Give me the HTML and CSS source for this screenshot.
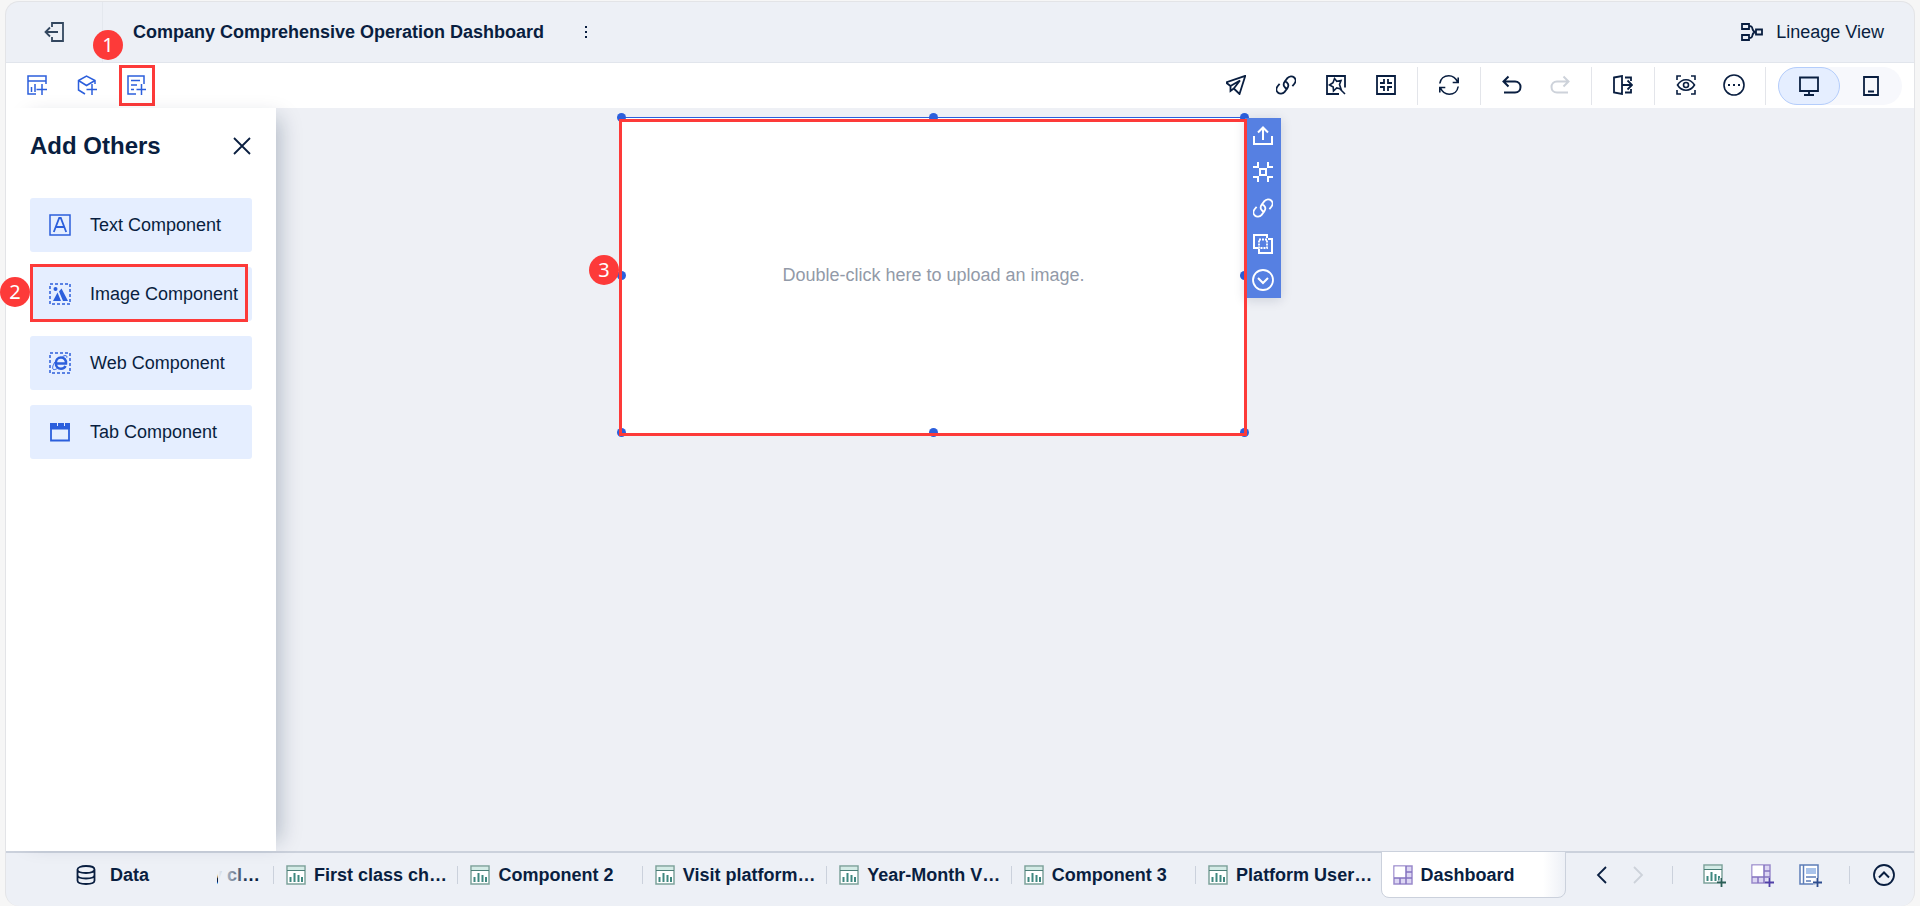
FILE: index.html
```html
<!DOCTYPE html>
<html lang="en">
    <head>
        <meta charset="utf-8">
        <title>Company Comprehensive Operation Dashboard</title>
        <link rel="stylesheet" href="styles.css">
    </head>
    <body>
        <svg class="sprite" aria-hidden="true">
            <symbol id="icon-link" viewBox="1 1 22 22">
                <g fill="none" stroke="currentColor">
                    <path d="M13.500 16c-3.500-.5-5.300-4.500-3-7.500l3-4c2.200-2.600 5.500-2.600 7.500-.8s2 5-.2 7.500l-1.800 2"/>
                    <path d="M10.500 8c3.500.5 5.300 4.500 3 7.500l-3 4c-2.200 2.600-5.500 2.600-7.500.8s-2-5 .2-7.500l1.800-2"/>
                </g>
            </symbol>
            <symbol id="icon-chart" viewBox="0 0 20 20">
                <path d="M1 1h18v18H1z" fill="#fff" stroke="#7da39c" stroke-width="1.5"/>
                <path d="M2 2h16v3H2z" fill="#d3ebe6"/>
                <path d="M1 5.5h18" stroke="#4b7f78"/>
                <path d="M4.500 17v-5M8.500 17V8M12.500 17v-7M16 17v-5" stroke="#3f8880" stroke-width="2"/>
            </symbol>
            <symbol id="icon-board" viewBox="0 0 20 20">
                <path d="M1 1h18v18H1z" fill="#dcd6f3" stroke="#9a8bcb" stroke-width="1.5"/>
                <path d="M1.500 1.500h11.500v11.500H1.500z" fill="#fff"/>
                <path d="M13 1v18M1 13h18M13 7h6M7 13v6" fill="none" stroke="#8473c0" stroke-width="1.5"/>
            </symbol>
        </svg>

        <div class="app">
            <header class="header">
                <button class="header__exit" aria-label="Exit">
                    <svg class="icon" viewBox="0 0 20 20"><path d="M8 5V1h11v18H8v-4M14 10H1.500M6 5.500 1.500 10 6 14.500" fill="none" stroke="currentColor" stroke-width="1.8"/></svg>
                </button>
                <h1 class="header__title">Company Comprehensive Operation Dashboard</h1>
                <button class="header__more" aria-label="More">
                    <svg class="icon" viewBox="0 0 20 20"><path d="M9 4h2v2H9zM9 9h2v2H9zM9 14h2v2H9z" fill="currentColor"/></svg>
                </button>
                <a class="header__lineage" href="#">
                    <svg class="icon icon--wide" viewBox="0 0 24 20"><path d="M2 2h7v5H2zM2 13h7v5H2zM16 7.500h6v5h-6zM9 4c3 0 3 1 3.500 3 .5 2 1 3 3.500 3M9 16c3 0 3-1 3.500-3 .5-2 1-3 3.500-3" fill="none" stroke="currentColor" stroke-width="1.8"/></svg>
                    Lineage View
                </a>
            </header>

            <div class="toolbar">
                <div class="toolbar__add">
                    <button class="tool" aria-label="Add component">
                        <svg class="icon" viewBox="0 0 20 20"><path d="M19 9V1H1v18h8M1 6h18M4.500 17v-5M8 17V9M9.500 14.500H20M15 9v11" fill="none" stroke="currentColor" stroke-width="1.5"/></svg>
                    </button>
                    <button class="tool" aria-label="Add reusable component">
                        <svg class="icon" viewBox="0 0 20 20"><path d="M8 19 1.500 15V5.500L9.500 1 18 5.500V9M1.500 5.500l8 5 8.500-5M9.500 14.500H20M15 9v11" fill="none" stroke="currentColor" stroke-width="1.5"/></svg>
                    </button>
                    <button class="tool tool--marked" aria-label="Add others">
                        <svg class="icon" viewBox="0 0 20 20"><path d="M17 9V1H1v18h8M4 5.500h9M4 10h6M4 14.500h3M9.500 14.500H19M14.500 9v11" fill="none" stroke="currentColor" stroke-width="1.5"/></svg>
                        <span class="badge badge--one">1</span>
                    </button>
                </div>

                <div class="toolbar__actions">
                    <div class="group group--wide">
                        <button class="tool" aria-label="Publish">
                            <svg class="icon" viewBox="0 0 20 20"><path d="M19.300.8 0 7.500l4.500 3.500v5l3.300-2.500L13.500 19zM4.500 11 14 5.500 7.800 13.500" fill="none" stroke="currentColor" stroke-width="1.8"/></svg>
                        </button>
                        <button class="tool" aria-label="Linkage">
                            <svg class="icon icon--link"><use href="#icon-link"/></svg>
                        </button>
                        <button class="tool" aria-label="Style">
                            <svg class="icon" viewBox="0 0 20 20"><path d="M19 12.500V1H1v18h12" fill="none" stroke="currentColor" stroke-width="1.8"/><path d="m8.500 3.500 2.300 2.800 4.200-.8-1.500 4 1.500 4.500-4.300-1-3.200 3-.3-4-3.700-2 3.500-2.300zM14 14l5 5" fill="none" stroke="currentColor" stroke-width="1.6"/></svg>
                        </button>
                        <button class="tool" aria-label="Fit">
                            <svg class="icon" viewBox="0 0 20 20"><path d="M1 1h18v18H1zM4 8h4V4M16 8h-4V4M4 12h4v4M16 12h-4v4" fill="none" stroke="currentColor" stroke-width="1.8"/></svg>
                        </button>
                    </div>
                    <div class="group">
                        <button class="tool" aria-label="Refresh">
                            <svg class="icon" viewBox="0 0 20 20"><path d="M.8 8.500C1.500 4 5 .8 9.800.8c4 0 7 2.400 8.700 6.200M19.200 11.500c-.7 4.500-4.200 7.700-9 7.700-4 0-7-2.400-8.700-6.200M19.200 2.500v5h-5.500M.8 17.500v-5h5.500" fill="none" stroke="currentColor" stroke-width="1.6"/></svg>
                        </button>
                    </div>
                    <div class="group">
                        <button class="tool" aria-label="Undo">
                            <svg class="icon" viewBox="0 0 20 20"><path d="M6.500 1.500 1.500 6.500l5 5M1.500 6.500H13c3.500 0 5.500 2.500 5.500 5.500S16.500 17.500 13 17.500H2" fill="none" stroke="currentColor" stroke-width="2"/></svg>
                        </button>
                        <button class="tool" aria-label="Redo" disabled>
                            <svg class="icon" viewBox="0 0 20 20"><path d="m13.500 1.500 5 5-5 5M18.500 6.500H7c-3.500 0-5.500 2.500-5.500 5.500S3.500 17.500 7 17.500h11" fill="none" stroke="currentColor" stroke-width="2"/></svg>
                        </button>
                    </div>
                    <div class="group">
                        <button class="tool" aria-label="Export">
                            <svg class="icon" viewBox="0 0 20 20"><path d="M1 2.500 9 1v18l-8-1.500zM12 2.500h6V6M12 17.500h6V14M9.500 10H19M14.500 5.500 19 10l-4.500 4.500" fill="none" stroke="currentColor" stroke-width="1.8"/></svg>
                        </button>
                    </div>
                    <div class="group">
                        <button class="tool" aria-label="Preview">
                            <svg class="icon" viewBox="0 0 20 20"><path d="M1 5V1h4M15 1h4v4M19 15v4h-4M5 19H1v-4M1.500 10C4 6 7 4.800 10 4.800S16 6 18.500 10C16 14 13 15.200 10 15.200S4 14 1.500 10z" fill="none" stroke="currentColor" stroke-width="1.6"/><circle cx="10" cy="10" r="2.500" fill="none" stroke="currentColor" stroke-width="1.6"/></svg>
                        </button>
                        <button class="tool" aria-label="More actions">
                            <svg class="icon icon--large" viewBox="0 0 22 22"><circle cx="11" cy="11" r="10" fill="none" stroke="currentColor" stroke-width="1.6"/><path d="M5 10h2v2H5zM10 10h2v2h-2zM15 10h2v2h-2z" fill="currentColor"/></svg>
                        </button>
                    </div>
                    <div class="device">
                        <button class="device__button device__button--active" aria-label="Desktop layout">
                            <svg class="icon" viewBox="0 0 20 20"><path d="M1 1.500h18v13.500H1zM10 15v4M5 19h10" fill="none" stroke="currentColor" stroke-width="1.8"/></svg>
                        </button>
                        <button class="device__button" aria-label="Mobile layout">
                            <svg class="icon" viewBox="0 0 20 20"><path d="M3 1h14v18H3zM7 15.500h6" fill="none" stroke="currentColor" stroke-width="1.8"/></svg>
                        </button>
                    </div>
                </div>
            </div>

            <main class="main">
                <aside class="sidebar">
                    <div class="sidebar__head">
                        <h2 class="sidebar__title">Add Others</h2>
                        <button class="sidebar__close" aria-label="Close">
                            <svg class="icon" viewBox="0 0 20 20"><path d="m2 2 16 16M18 2 2 18" stroke="currentColor" stroke-width="1.8"/></svg>
                        </button>
                    </div>
                    <button class="card">
                        <svg class="icon icon--large" viewBox="0 0 22 22"><path d="M1 1h20v20H1z" fill="none" stroke="currentColor" stroke-width="1.5"/><path d="m4.800 18 5.400-14h1.600l5.400 14M7 13h8" fill="none" stroke="currentColor" stroke-width="1.8"/></svg>
                        Text Component
                    </button>
                    <button class="card card--marked">
                        <svg class="icon icon--large" viewBox="0 0 22 22"><path d="M1 1h20v20H1z" fill="none" stroke="currentColor" stroke-width="1.5" stroke-dasharray="3 2"/><circle cx="6.500" cy="6" r="2" fill="currentColor"/><path d="m4 18 4.500-8.500L12 18zM10 8.500l2.500-3L19 18h-5z" fill="currentColor"/></svg>
                        Image Component
                        <span class="badge badge--two">2</span>
                    </button>
                    <button class="card">
                        <svg class="icon icon--large" viewBox="0 0 22 22"><path d="M1 1h20v20H1z" fill="none" stroke="currentColor" stroke-width="1.5" stroke-dasharray="3 2"/><path d="M6.500 11.500H17c.4-3.500-2-6-5-6s-5.200 2.500-5.200 5.700 2.200 5.500 5.200 5.500c2.200 0 3.800-1 4.500-2.700" fill="none" stroke="currentColor" stroke-width="2.5"/><path d="M13.500 4.500c3-1.500 5-1 4.300 1.200M6 10c-2.500 3.500-3 6.700-1.500 7.500 1 .4 2.500-.2 4-1.200" fill="none" stroke="currentColor"/></svg>
                        Web Component
                    </button>
                    <button class="card">
                        <svg class="icon icon--large" viewBox="0 0 22 22"><path d="M2 7.500h18V19.500H2z" fill="none" stroke="currentColor" stroke-width="1.8"/><path d="M1 2h7v4H1zM9 2h6v4H9zM16 2h5v4h-5zM1 5h20v3H1z" fill="currentColor"/></svg>
                        Tab Component
                    </button>
                </aside>

                <section class="canvas">
                    <div class="widget">
                        <p class="widget__hint">Double-click here to upload an image.</p>
                        <span class="handle handle--nw"></span>
                        <span class="handle handle--n"></span>
                        <span class="handle handle--ne"></span>
                        <span class="handle handle--w"></span>
                        <span class="handle handle--e"></span>
                        <span class="handle handle--sw"></span>
                        <span class="handle handle--s"></span>
                        <span class="handle handle--se"></span>
                        <div class="widget__tools">
                            <button class="widget__tool" aria-label="Upload">
                                <svg class="icon" viewBox="0 0 20 20"><path d="M1 10v8h18v-8M10 14V2M5 6.500 10 1.500l5 5" fill="none" stroke="currentColor" stroke-width="2"/></svg>
                            </button>
                            <button class="widget__tool" aria-label="Resize">
                                <svg class="icon" viewBox="0 0 20 20"><path d="M7 7h6v6H7zM0 5h5V0M20 5h-5V0M0 15h5v5M20 15h-5v5" fill="none" stroke="currentColor" stroke-width="2"/></svg>
                            </button>
                            <button class="widget__tool" aria-label="Link">
                                <svg class="icon icon--link-bold"><use href="#icon-link"/></svg>
                            </button>
                            <button class="widget__tool" aria-label="Copy">
                                <svg class="icon" viewBox="0 0 20 20"><path d="M1 1h13v13H1zM6 5h13v14H6z" fill="none" stroke="currentColor" stroke-width="2"/><path d="M6 5h8v9H6z" fill="none" stroke="#5680e2" stroke-width="2"/><path d="M6 5.500h8v8.500H6z" fill="none" stroke="currentColor" stroke-width="1.8" stroke-dasharray="2 1"/></svg>
                            </button>
                            <button class="widget__tool" aria-label="Expand">
                                <svg class="icon icon--large" viewBox="0 0 22 22"><circle cx="11" cy="11" r="10" fill="none" stroke="currentColor" stroke-width="1.8"/><path d="m6 9 5 5 5-5" fill="none" stroke="currentColor" stroke-width="2"/></svg>
                            </button>
                        </div>
                        <div class="widget__mark"></div>
                        <span class="badge badge--three">3</span>
                    </div>
                </section>
            </main>

            <footer class="footer">
                <button class="footer__data">
                    <svg class="icon" viewBox="0 0 20 20"><path d="M1.500 4.500C1.500 2.500 5 1 10 1s8.500 1.500 8.500 3.500S15 8 10 8 1.500 6.500 1.500 4.500zV15.500C1.500 17.500 5 19 10 19s8.500-1.500 8.500-3.500V4.500M1.500 10c0 2 3.500 3.500 8.500 3.500s8.500-1.500 8.500-3.500" fill="none" stroke="currentColor" stroke-width="1.8"/></svg>
                    Data
                </button>
                <nav class="tabs">
                    <a class="tab tab--cut" href="#"><span>y cl…</span></a>
                    <a class="tab" href="#"><svg class="icon"><use href="#icon-chart"/></svg>First class ch…</a>
                    <a class="tab" href="#"><svg class="icon"><use href="#icon-chart"/></svg>Component 2</a>
                    <a class="tab" href="#"><svg class="icon"><use href="#icon-chart"/></svg>Visit platform…</a>
                    <a class="tab" href="#"><svg class="icon"><use href="#icon-chart"/></svg>Year-Month V…</a>
                    <a class="tab" href="#"><svg class="icon"><use href="#icon-chart"/></svg>Component 3</a>
                    <a class="tab tab--last" href="#"><svg class="icon"><use href="#icon-chart"/></svg>Platform User…</a>
                    <a class="tab tab--active" href="#"><svg class="icon"><use href="#icon-board"/></svg>Dashboard</a>
                </nav>
                <div class="footer__tools">
                    <button class="arrow" aria-label="Previous tab">
                        <svg class="icon" viewBox="0 0 20 20"><path d="m14 2-8 8 8 8" fill="none" stroke="currentColor" stroke-width="1.8"/></svg>
                    </button>
                    <button class="arrow" aria-label="Next tab" disabled>
                        <svg class="icon" viewBox="0 0 20 20"><path d="m6 2 8 8-8 8" fill="none" stroke="currentColor" stroke-width="1.8"/></svg>
                    </button>
                    <span class="divider"></span>
                    <button class="tool" aria-label="New component">
                        <svg class="icon icon--new" viewBox="0 0 24 24"><use href="#icon-chart" width="20" height="20"/><path d="M14 18.500h9M18.500 14v9" stroke="#edf0f6" stroke-width="4"/><path d="M14 18.500h9M18.500 14v9" stroke="#2b5f57" stroke-width="1.8"/></svg>
                    </button>
                    <button class="tool" aria-label="New dashboard">
                        <svg class="icon icon--new" viewBox="0 0 24 24"><use href="#icon-board" width="20" height="20"/><path d="M14 18.500h9M18.500 14v9" stroke="#edf0f6" stroke-width="4"/><path d="M14 18.500h9M18.500 14v9" stroke="#5140a8" stroke-width="1.8"/></svg>
                    </button>
                    <button class="tool" aria-label="New report">
                        <svg class="icon icon--new" viewBox="0 0 24 24"><path d="M1 1h18v19H1z" fill="#fff" stroke="#5d7db8" stroke-width="1.5"/><path d="M4.500 1v19" stroke="#5d7db8" stroke-width="1.5"/><path d="M7 4h10v6H7z" fill="#a9c3ea"/><path d="M7 13h10M7 17h5" stroke="#5d7db8" stroke-width="1.5"/><path d="M14 18.500h9M18.500 14v9" stroke="#edf0f6" stroke-width="4"/><path d="M14 18.500h9M18.500 14v9" stroke="#2e4d8f" stroke-width="1.8"/></svg>
                    </button>
                    <span class="divider"></span>
                    <button class="arrow" aria-label="Collapse">
                        <svg class="icon icon--large" viewBox="0 0 22 22"><circle cx="11" cy="11" r="10" fill="none" stroke="currentColor" stroke-width="1.8"/><path d="m6 13.500 5-5 5 5" fill="none" stroke="currentColor" stroke-width="2"/></svg>
                    </button>
                </div>
            </footer>
        </div>
    </body>
</html>
```
FILE: styles.css
```css
* {
  box-sizing: border-box;
  margin: 0;
  padding: 0;
}

body {
  padding-top: 1px;
  font-family: "Liberation Sans", Arial, sans-serif;
  font-size: 18px;
  line-height: 22px;
  color: #091e40;
  background-color: #f6f6f6;
}

button {
  font: inherit;
  color: inherit;
  background: none;
  border: none;
  cursor: pointer;
}

a {
  color: inherit;
  text-decoration: none;
}

.sprite {
  position: absolute;
  width: 0;
  height: 0;
}

.icon {
  display: block;
  flex: none;
  width: 20px;
  height: 20px;
}

.icon--wide {
  width: 24px;
}

.icon--large {
  width: 22px;
  height: 22px;
}

.icon--new {
  width: 24px;
  height: 24px;
}

.icon--link {
  stroke-width: 2px;
}

.icon--link-bold {
  stroke-width: 2px;
}

.app {
  display: flex;
  flex-direction: column;
  height: calc(100vh - 1px);
  margin: 0 5px;
  border: 1px solid #e3e4e7;
  border-bottom: none;
  border-radius: 14px;
  background-color: #edf0f6;
}

/* header */
.header {
  display: flex;
  align-items: center;
  height: 61px;
  border-bottom: 1px solid #e1e5ec;
}

.header__exit {
  display: flex;
  align-items: center;
  align-self: stretch;
  width: 97px;
  padding-left: 38px;
  color: #33475f;
  border-right: 1px solid #e4e8ee;
}

.header__title {
  margin-left: 30px;
  font-size: 18px;
  font-weight: bold;
}

.header__more {
  margin-left: 32px;
}

.header__lineage {
  display: flex;
  align-items: center;
  gap: 12px;
  margin-left: auto;
  margin-right: 30px;
}

/* toolbar */
.toolbar {
  display: flex;
  justify-content: space-between;
  align-items: center;
  height: 45px;
  padding: 0 12px 0 7px;
  background-color: #fff;
}

.toolbar__add,
.toolbar__actions,
.group {
  display: flex;
  align-items: center;
}

.toolbar__add {
  gap: 2px;
  color: #2c5fdc;
}

.group {
  height: 38px;
  padding: 0 7px;
  border-right: 1px solid #e3e5ea;
}

.group--wide {
  gap: 2px;
}

.tool {
  position: relative;
  display: flex;
  align-items: center;
  justify-content: center;
  width: 48px;
  height: 38px;
  padding-bottom: 2px;
}

.tool:disabled,
.arrow:disabled {
  color: #cdd2da;
}

.tool--marked {
  width: 36px;
  height: 41px;
  margin: 0 6px;
  border: 3px solid #fd3a39;
}

.device {
  display: flex;
  margin-left: 12px;
  border-radius: 19px;
  background-color: #f7f8fc;
}

.device__button {
  display: flex;
  align-items: center;
  justify-content: center;
  width: 62px;
  height: 38px;
  border-radius: 19px;
}

.device__button--active {
  border: 1px solid #b4cdfb;
  background-color: #e5eeff;
}

/* sidebar */
.main {
  display: flex;
  flex: 1;
  min-height: 0;
}

.sidebar {
  position: relative;
  z-index: 1;
  display: flex;
  flex-direction: column;
  gap: 15px;
  width: 270px;
  padding: 26px 24px;
  background-color: #fff;
  box-shadow: 14px 0 20px -10px rgba(9, 30, 64, 0.25);
}

.sidebar__head {
  display: flex;
  align-items: center;
  justify-content: space-between;
  height: 24px;
  margin-bottom: 25px;
}

.sidebar__title {
  font-size: 24px;
}

.sidebar__close {
  display: block;
}

.card {
  position: relative;
  display: flex;
  align-items: center;
  gap: 19px;
  height: 54px;
  padding-left: 19px;
  border-radius: 3px;
  background-color: #e5eeff;
  white-space: nowrap;
}

.card .icon {
  color: #2c5fdc;
}

.card--marked::after {
  content: "";
  position: absolute;
  top: -3px;
  bottom: -1px;
  left: 0;
  right: 4px;
  border: 3px solid #fd3a39;
}

/* numbered badges */
.badge {
  position: absolute;
  width: 30px;
  height: 30px;
  border-radius: 50%;
  background-color: #fd3a39;
  color: #fff;
  font-family: "Noto Sans", sans-serif;
  font-size: 20px;
  line-height: 30px;
  text-align: center;
}

.badge--one {
  left: -29px;
  top: -38px;
}

.badge--two {
  left: -30px;
  top: 10px;
}

.badge--three {
  left: -33px;
  top: 137px;
}

/* canvas */
.canvas {
  position: relative;
  flex: 1;
  background-color: #eef0f5;
}

.widget {
  position: absolute;
  left: 345px;
  top: 9px;
  display: flex;
  align-items: center;
  justify-content: center;
  width: 625px;
  height: 317px;
  padding-bottom: 2px;
  border: 1px solid #2c5fdc;
  background-color: #fff;
}

.widget__hint {
  color: #929aa8;
}

.widget__mark {
  position: absolute;
  top: 1px;
  left: -3px;
  right: -2px;
  bottom: -3px;
  border: 3px solid #fd3a39;
}

.handle {
  position: absolute;
  width: 9px;
  height: 9px;
  margin: -5px;
  border-radius: 50%;
  background-color: #2c5fdc;
}

.handle--nw { left: 0; top: 0; }
.handle--n { left: 50%; top: 0; }
.handle--ne { left: 100%; top: 0; }
.handle--w { left: 0; top: 50%; }
.handle--e { left: 100%; top: 50%; }
.handle--sw { left: 0; top: 100%; }
.handle--s { left: 50%; top: 100%; }
.handle--se { left: 100%; top: 100%; }

.widget__tools {
  position: absolute;
  left: 100%;
  top: 0;
  width: 36px;
  background-color: #5680e2;
  color: #fff;
  box-shadow: 0 2px 12px rgba(9, 30, 64, 0.15);
}

.widget__tool {
  display: flex;
  align-items: center;
  justify-content: center;
  width: 100%;
  height: 36px;
}

/* footer */
.footer {
  display: flex;
  height: 55px;
  border-top: 2px solid #cbd1dc;
}

.footer__data {
  display: flex;
  align-items: center;
  gap: 14px;
  width: 211px;
  height: 43px;
  padding-left: 70px;
  font-weight: bold;
}

.tabs {
  display: flex;
  flex: 1;
  min-width: 0;
}

.tab {
  position: relative;
  display: flex;
  flex: 1;
  align-items: center;
  gap: 8px;
  min-width: 0;
  height: 43px;
  padding-left: 12px;
  font-weight: bold;
  white-space: nowrap;
}

.tab::after {
  content: "";
  position: absolute;
  right: 0;
  top: 13px;
  width: 1px;
  height: 18px;
  background-color: #cbd1dc;
}

.tab--cut {
  flex: none;
  justify-content: flex-end;
  width: 57px;
  padding: 0 14px 0 0;
  overflow: hidden;
}

/* fades out the tab that is scrolled off to the left */
.tab--cut::before {
  content: "";
  position: absolute;
  inset: 0 24px 0 1px;
  background: linear-gradient(to right, #edf0f6, rgba(237, 240, 246, 0));
}

.tab--cut span {
  flex: none;
}

.tab--active {
  height: 47px;
  margin-top: -2px;
  padding: 0 0 0 11px;
  border: 1px solid #cbd1dc;
  border-radius: 0 0 8px 8px;
  background: linear-gradient(to left, #edf0f6, #fff 22px);
}

.tab--last::after,
.tab--active::after {
  display: none;
}

.footer__tools {
  display: flex;
  align-items: center;
  height: 43px;
  padding-left: 18px;
  padding-right: 12px;
}

.footer__tools .tool {
  padding: 2px 0 0 4px;
}

.arrow {
  display: flex;
  align-items: center;
  justify-content: center;
  width: 36px;
  height: 36px;
}

.divider {
  width: 1px;
  height: 18px;
  margin: 0 16px;
  background-color: #cbd1dc;
}
```
